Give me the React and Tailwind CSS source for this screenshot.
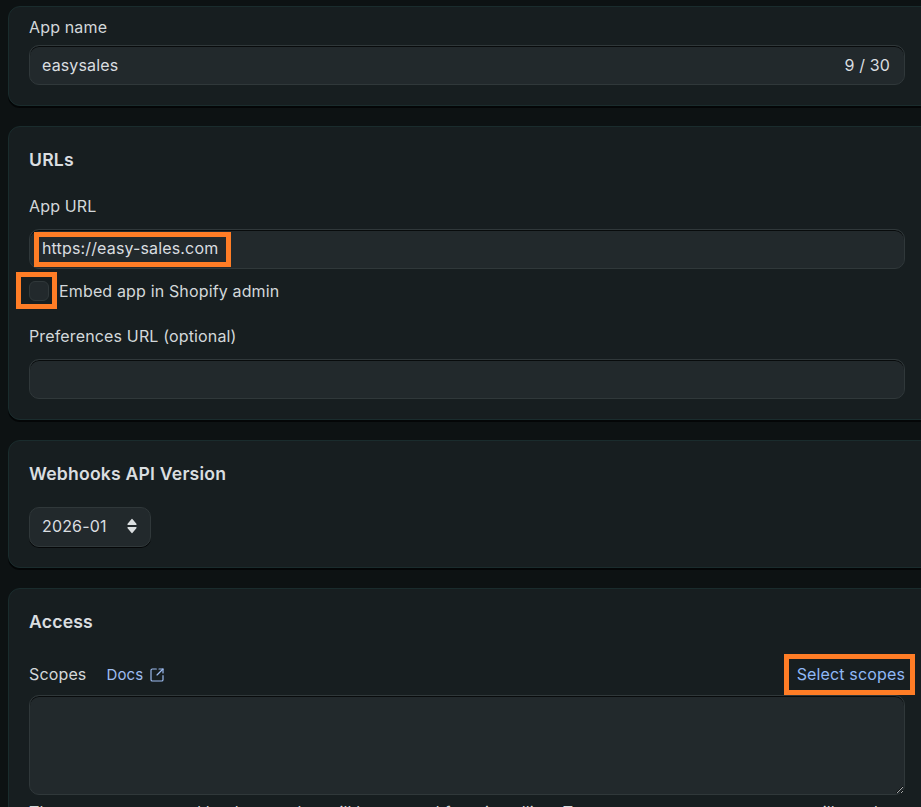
import React from "react";
import { SquareArrowOutUpRight } from "lucide-react";

const inputBox =
  "block w-full h-10 rounded-[10px] border border-[#30383a] bg-[#22292c] px-3 text-base text-[#dadee0] shadow-[inset_0_1px_0_#080b0c] outline-none";

const Card = ({ children, className = "pt-[21px]" }) => (
  <section className={`rounded-xl border border-[#1a2c2d] bg-[#171e20] px-5 pb-5 shadow-[0_2px_0_#040607] ${className}`}>
    {children}
  </section>
);

const Heading = ({ children, className = "mb-[21px]" }) => (
  <h2 className={`text-[17.6px] leading-6 font-semibold tracking-[0.2px] text-[#dadee0] ${className}`}>{children}</h2>
);

const Label = ({ children, className = "mb-[11px]" }) => (
  <label className={`block text-base leading-6 text-[#d3d8da] ${className}`}>{children}</label>
);

// orange annotation frame that sits on top of the thing it points at
const Mark = ({ className }) => (
  <span className={`pointer-events-none absolute border-[5px] border-[#ff7d26] ${className}`} />
);

const UpDownIcon = () => (
  <svg width="12" height="16" viewBox="0 0 12 16" fill="#dadee0">
    <path d="M5.2 1.4a1 1 0 0 1 1.6 0l3.6 4.3c.5.6.1 1.3-.8 1.3H2.4c-.9 0-1.3-.7-.8-1.3z" />
    <path d="M5.2 14.6a1 1 0 0 0 1.6 0l3.6-4.3c.5-.6.1-1.3-.8-1.3H2.4c-.9 0-1.3.7-.8 1.3z" />
  </svg>
);

export default function App() {
  return (
    <div className="h-[807px] w-[921px] overflow-hidden bg-[#0d1213] pt-[6px] pl-2 font-['Inter',sans-serif] tracking-[0.15px]">
      <div className="flex w-[940px] flex-col gap-5">
        <Card className="pt-2">
          <Label className="mb-[6px]">App name</Label>
          <div className="relative w-[876px]">
            <input readOnly value="easysales" className={inputBox} />
            <span className="absolute top-2 right-[15px] text-base leading-6 text-[#dadee0]">9 / 30</span>
          </div>
        </Card>

        <Card>
          <Heading className="mb-[22px]">URLs</Heading>
          <Label>App URL</Label>
          <div className="relative w-[876px]">
            <input readOnly value="https://easy-sales.com" className={`${inputBox} pb-[2px]`} />
            <Mark className="top-[3px] left-[5px] h-[35px] w-[197px]" />
          </div>
          <div className="mt-[10px] flex items-center gap-[10px]">
            <span className="relative h-5 w-5 rounded-md border border-[#30383a] bg-[#22292c]">
              <Mark className="-top-[10px] -left-[14px] h-[37px] w-[41px]" />
            </span>
            <span className="text-base leading-6 text-[#d3d8da]">Embed app in Shopify admin</span>
          </div>
          <div className="mt-[21px] w-[876px]">
            <Label>Preferences URL (optional)</Label>
            <input readOnly className={inputBox} />
          </div>
        </Card>

        <Card>
          <Heading>Webhooks API Version</Heading>
          <button className="flex h-10 w-[122px] items-center justify-between rounded-[10px] border border-[#30383a] bg-[#22292c] px-3 pb-[2px] text-base text-[#dadee0] shadow-[0_1px_0_#050708]">
            2026-01
            <UpDownIcon />
          </button>
        </Card>

        <Card>
          <Heading className="mb-[28px]">Access</Heading>
          <div className="relative mb-[9px] flex w-[876px] items-center justify-between">
            <div className="flex items-center gap-5">
              <span className="text-base leading-6 text-[#d3d8da]">Scopes</span>
              <a className="flex translate-y-px items-center gap-[6px] text-[15px] leading-6 text-[#9dbcf0]">
                Docs
                <SquareArrowOutUpRight size={16} strokeWidth={1.75} />
              </a>
            </div>
            <a className="text-base leading-6 text-[#8fb8f5]">Select scopes</a>
            <Mark className="-top-[8px] -right-[10px] h-[41px] w-[131px]" />
          </div>
          <textarea readOnly className="block h-[100px] w-[876px] resize-y rounded-[10px] border border-[#30383a] bg-[#22292c] px-3 py-2 text-base text-[#dadee0] shadow-[inset_0_1px_0_#080b0c] outline-none" />
          <p className="mt-[5px] w-[876px] text-base leading-6 text-[#d3d8da]">
            The scopes requested by the app that will be granted from installing. To manage access scopes, you will need the CLI.
          </p>
        </Card>
      </div>
    </div>
  );
}
